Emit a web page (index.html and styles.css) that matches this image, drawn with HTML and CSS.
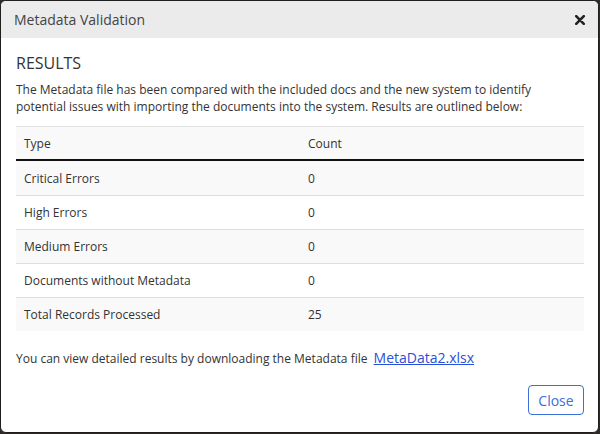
FILE: index.html
```html
<!DOCTYPE html>
<html>
<head>
<meta charset="utf-8">
<link rel="stylesheet" href="styles.css">
</head>
<body>
<div class="modal">
  <div class="modal-header">
    <span class="modal-title">Metadata Validation</span>
    <button class="close-x" aria-label="Close">
      <svg width="10" height="10" viewBox="0 0 10 10"><path d="M1.2 1.2 L8.8 8.8 M8.8 1.2 L1.2 8.8" stroke="#222" stroke-width="2.6" stroke-linecap="round"/></svg>
    </button>
  </div>
  <div class="modal-body">
    <h2 class="heading">RESULTS</h2>
    <p class="intro">The Metadata file has been compared with the included docs and the new system to identify potential issues with importing the documents into the system. Results are outlined below:</p>
    <table class="results">
      <thead>
        <tr><th>Type</th><th>Count</th></tr>
      </thead>
      <tbody>
        <tr><td>Critical Errors</td><td>0</td></tr>
        <tr><td>High Errors</td><td>0</td></tr>
        <tr><td>Medium Errors</td><td>0</td></tr>
        <tr><td>Documents without Metadata</td><td>0</td></tr>
        <tr><td>Total Records Processed</td><td>25</td></tr>
      </tbody>
    </table>
    <p class="download">You can view detailed results by downloading the Metadata file <a href="#" class="file-link">MetaData2.xlsx</a></p>
    <div class="actions">
      <button class="btn-close">Close</button>
    </div>
  </div>
</div>
</body>
</html>
```
FILE: styles.css
```css
html, body {
  margin: 0;
  padding: 0;
  background: #2e2a27;
  font-family: "Open Sans", "Liberation Sans", sans-serif;
  color: #333;
}
.modal {
  width: 597px;
  height: 431px;
  background: #fff;
  border: 1px solid #1e1e1e;
  border-radius: 6px;
  overflow: hidden;
}
.modal-header {
  height: 37px;
  background: #ebebeb;
  display: flex;
  align-items: center;
  justify-content: space-between;
  padding: 0 12px 0 13px;
}
.modal-title {
  font-size: 14px;
  color: #444;
}
.close-x {
  background: none;
  border: 0;
  padding: 0;
  width: 12px;
  height: 12px;
  display: flex;
  align-items: center;
  justify-content: center;
}
.modal-body {
  padding: 13px 14px 0 15px;
}
.heading {
  margin: 0;
  font-size: 16px;
  font-weight: 400;
  line-height: 24px;
  color: #333;
}
.intro {
  margin: 6px 0 0;
  font-size: 12px;
  line-height: 17px;
}
.results {
  width: 568px;
  margin-top: 11px;
  border-collapse: collapse;
  font-size: 12px;
}
.results th, .results td {
  text-align: left;
  width: 50%;
  padding: 8px 8px;
  line-height: 17px;
}
.results th {
  font-weight: 400;
  padding: 8px 8px 7px;
  border-top: 1px solid #e2e2e2;
  border-bottom: 2px solid #111;
  background: #f9f9f9;
}
.results td {
  border-top: 1px solid #dedede;
}
.results tbody tr:first-child td {
  border-top: 0;
  padding-top: 9px;
}
.results tbody tr:nth-child(odd) td {
  background: #f9f9f9;
}
.download {
  margin: 18px 0 0;
  font-size: 12px;
  line-height: 18px;
}
.file-link {
  font-size: 14px;
  color: #2a4fd6;
  margin-left: 3px;
}
.actions {
  display: flex;
  justify-content: flex-end;
  width: 568px;
  margin-top: 17px;
}
.btn-close {
  width: 56px;
  height: 30px;
  border: 1px solid #3b6fd9;
  border-radius: 4px;
  background: #fff;
  color: #3b6fd9;
  font-family: "Open Sans", "Liberation Sans", sans-serif;
  font-size: 14px;
  padding: 0;
}
```
